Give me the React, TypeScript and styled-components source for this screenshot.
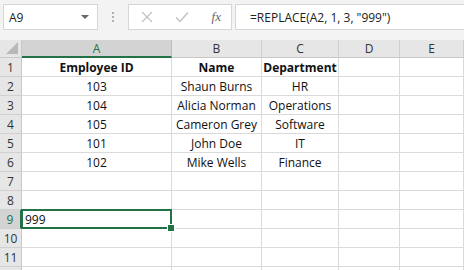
import styled, { createGlobalStyle } from "styled-components"

const Global = createGlobalStyle`
  html, body {
    margin: 0;
    padding: 0;
    background: #ffffff;
  }
  body {
    font-family: "Open Sans", "Liberation Sans", sans-serif;
    overflow: hidden;
  }
`

const Page = styled.div`
  width: 464px;
  height: 270px;
  overflow: hidden;
  background: #ffffff;
`

const Toolbar = styled.div`
  height: 40px;
  background: #f3f3f3;
  display: flex;
  align-items: flex-start;
  padding: 4px 0 0 3px;
  box-sizing: border-box;
`

const NameBox = styled.div`
  width: 95px;
  height: 26px;
  box-sizing: border-box;
  background: #ffffff;
  border: 1px solid #d6d6d6;
  display: flex;
  align-items: center;
  justify-content: space-between;
  padding: 0 8px 0 5px;
  font-size: 12px;
  color: #222;
`

const Caret = styled.span`
  width: 0;
  height: 0;
  border-left: 4px solid transparent;
  border-right: 4px solid transparent;
  border-top: 4px solid #666;
`

const Dots = styled.div`
  width: 30px;
  height: 26px;
  display: flex;
  flex-direction: column;
  align-items: center;
  justify-content: center;
  gap: 2px;
`

const Dot = styled.span`
  width: 2px;
  height: 2px;
  background: #b0b0b0;
`

const IconBox = styled.div`
  width: 104px;
  height: 26px;
  box-sizing: border-box;
  background: #ffffff;
  border: 1px solid #d6d6d6;
  display: flex;
  align-items: center;
  padding: 0 10px 0 12px;
  justify-content: space-between;
  color: #c0c0c0;
`

const Fx = styled.span`
  font-family: "Liberation Serif", serif;
  font-style: italic;
  font-size: 13px;
  color: #666;
`

const FormulaBox = styled.div`
  flex: 1;
  height: 26px;
  margin-left: 3px;
  box-sizing: border-box;
  background: #ffffff;
  border: 1px solid #d6d6d6;
  border-right: none;
  display: flex;
  align-items: center;
  padding-left: 14px;
  font-size: 12px;
  color: #222;
`

const Sheet = styled.div`
  display: grid;
  grid-template-columns: 22px 150px 90px 77px 61px 64px;
  grid-auto-rows: 19px;
  grid-template-rows: 18px;
`

const Corner = styled.div`
  background: #e6e6e6;
  border-right: 1px solid #c8c8c8;
  border-bottom: 1px solid #c8c8c8;
  position: relative;
  box-sizing: border-box;
  &::after {
    content: "";
    position: absolute;
    right: 3px;
    bottom: 3px;
    width: 0;
    height: 0;
    border-left: 12px solid transparent;
    border-bottom: 12px solid #b8b8b8;
  }
`

const ColHead = styled.div<{ $active?: boolean }>`
  background: ${p => (p.$active ? "#d3d3d3" : "#e6e6e6")};
  color: ${p => (p.$active ? "#217346" : "#333")};
  border-right: 1px solid ${p => (p.$active ? "#bdbdbd" : "#d0d0d0")};
  border-bottom: ${p => (p.$active ? "2px solid #217346" : "1px solid #c8c8c8")};
  box-sizing: border-box;
  display: flex;
  align-items: center;
  justify-content: center;
  font-size: 12px;
`

const RowHead = styled.div<{ $active?: boolean }>`
  background: ${p => (p.$active ? "#d3d3d3" : "#e6e6e6")};
  color: ${p => (p.$active ? "#217346" : "#333")};
  border-right: ${p => (p.$active ? "2px solid #217346" : "1px solid #c8c8c8")};
  border-bottom: 1px solid #d0d0d0;
  box-sizing: border-box;
  display: flex;
  align-items: center;
  justify-content: center;
  font-size: 12px;
`

const Cell = styled.div<{ $bold?: boolean; $align?: string }>`
  border-right: 1px solid #dadada;
  border-bottom: 1px solid #dadada;
  box-sizing: border-box;
  display: flex;
  align-items: center;
  justify-content: ${p => p.$align || "center"};
  padding: 0 3px;
  font-size: 12px;
  font-weight: ${p => (p.$bold ? 700 : 400)};
  color: #111;
  white-space: nowrap;
  overflow: visible;
  position: relative;
`

const Selected = styled(Cell)`
  &::before {
    content: "";
    position: absolute;
    left: -1px;
    top: -1px;
    right: -1px;
    bottom: -1px;
    border: 2px solid #217346;
  }
  &::after {
    content: "";
    position: absolute;
    right: -4px;
    bottom: -4px;
    width: 6px;
    height: 6px;
    background: #217346;
    border: 1px solid #fff;
    z-index: 2;
  }
`

const cols = ["A", "B", "C", "D", "E"]

const data: string[][] = [
  ["Employee ID", "Name", "Department"],
  ["103", "Shaun Burns", "HR"],
  ["104", "Alicia Norman", "Operations"],
  ["105", "Cameron Grey", "Software"],
  ["101", "John Doe", "IT"],
  ["102", "Mike Wells", "Finance"],
]

export default function App() {
  const rows = Array.from({ length: 12 }, (_, i) => i + 1)
  return (
    <Page>
      <Global />
      <Toolbar>
        <NameBox>
          A9
          <Caret />
        </NameBox>
        <Dots>
          <Dot />
          <Dot />
          <Dot />
        </Dots>
        <IconBox>
          <svg width="12" height="12" viewBox="0 0 12 12">
            <path d="M1 1 L11 11 M11 1 L1 11" stroke="#c4c4c4" strokeWidth="1.4" />
          </svg>
          <svg width="14" height="12" viewBox="0 0 14 12">
            <path d="M1 6.5 L5 10.5 L13 1.5" stroke="#c4c4c4" strokeWidth="1.5" fill="none" />
          </svg>
          <Fx>fx</Fx>
        </IconBox>
        <FormulaBox>=REPLACE(A2, 1, 3, "999")</FormulaBox>
      </Toolbar>
      <Sheet>
        <Corner />
        {cols.map(c => (
          <ColHead key={c} $active={c === "A"}>
            {c}
          </ColHead>
        ))}
        {rows.map(r => {
          const row = data[r - 1]
          return [
            <RowHead key={`h${r}`} $active={r === 9}>
              {r < 12 ? r : ""}
            </RowHead>,
            ...cols.map((c, ci) => {
              if (r === 9 && ci === 0) {
                return (
                  <Selected key={`${c}${r}`} $align="flex-start">
                    999
                  </Selected>
                )
              }
              return (
                <Cell key={`${c}${r}`} $bold={r === 1}>
                  {row && row[ci]}
                </Cell>
              )
            }),
          ]
        })}
      </Sheet>
    </Page>
  )
}
